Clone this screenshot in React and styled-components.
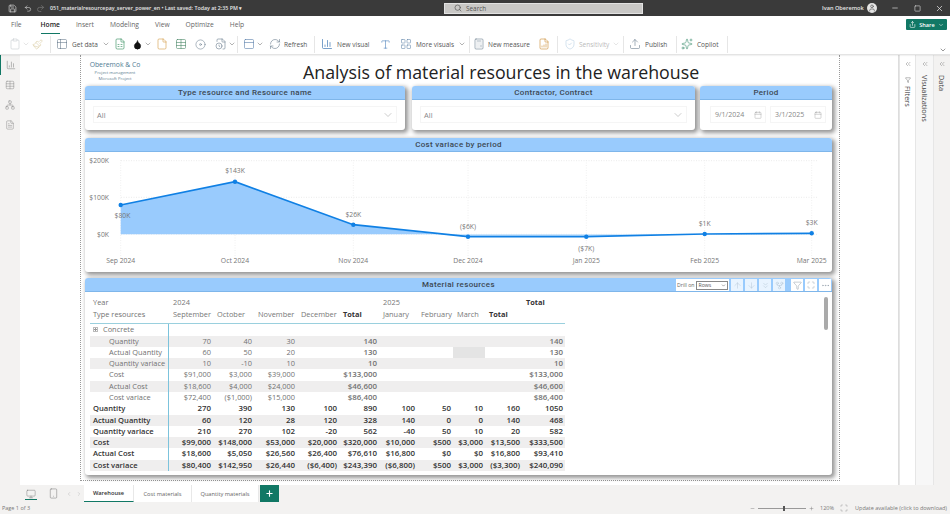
import React from 'react'
import styled, { createGlobalStyle } from 'styled-components'
import {
  Save, Undo2, Redo2, Search, Minus, Plus, Square, X, User, ChevronDown, ChevronsLeft, ChevronLeft, ChevronRight,
  Clipboard, Paintbrush, Table2, FileSpreadsheet, Droplet, File, Table, Disc, FileClock, PanelTop, RefreshCw,
  BarChart3, Type, LayoutGrid, Calculator, FileBarChart, ShieldCheck, Upload, Sparkles, Share, Calendar, Filter,
  Network, FileText, Monitor, Smartphone, ArrowUp, ArrowDown, ChevronsDown, GitFork, Maximize, MoreHorizontal, Scan,
} from 'lucide-react'

const GlobalStyle = createGlobalStyle`
  html, body { margin: 0; padding: 0; background: #fff; }
  * { box-sizing: border-box; }
  body { font-family: "Open Sans", "Noto Sans", sans-serif; }
`

const Shell = styled.div`
  width: 950px;
  height: 514px;
  overflow: hidden;
  display: flex;
  flex-direction: column;
  background: #fff;
`

const TitleBar = styled.div`
  height: 16px;
  background: #3a3a3a;
  display: flex;
  align-items: center;
  color: #e8e8e8;
  flex: none;
`
const TitleIcon = styled.span`
  display: flex;
  flex: none;
  width: ${p => p.$w}px;
  justify-content: center;
  color: ${p => p.$dim ? '#777' : '#c8c8c8'};
`
const FileName = styled.span`
  font-size: 5.3px;
  font-weight: 600;
  width: 194px;
  flex: none;
  margin-left: 2px;
  white-space: nowrap;
`
const SearchBox = styled.div`
  width: 199px;
  height: 11px;
  flex: none;
  margin-left: 200px;
  background: #c9c8c6;
  border: 1px solid #e2e2e2;
  display: flex;
  align-items: center;
  padding-left: 9px;
  gap: 4px;
  color: #555;
  font-size: 6.4px;
`
const UserName = styled.span`
  font-size: 5.6px;
  font-weight: 600;
  margin-left: 179px;
  width: 45px;
  flex: none;
  white-space: nowrap;
`
const Avatar = styled.span`
  width: 10px;
  height: 10px;
  flex: none;
  border-radius: 50%;
  background: #e4e4e4;
  color: #555;
  display: flex;
  align-items: center;
  justify-content: center;
  margin-right: 7px;
`
const WinBtn = styled.span`
  width: 22px;
  flex: none;
  display: flex;
  justify-content: center;
  color: #e0e0e0;
`

const MenuRow = styled.div`
  height: 18px;
  flex: none;
  display: flex;
  align-items: center;
  padding-left: 11px;
  gap: 16px;
  position: relative;
  background: #fff;
`
const MenuItem = styled.span`
  font-size: 6.7px;
  height: 18px;
  line-height: 17px;
  color: ${p => p.$active ? '#222' : '#666'};
  font-weight: ${p => p.$active ? 600 : 400};
  border-bottom: ${p => p.$active ? '1.5px solid #117865' : '0'};
  margin-right: ${p => p.$gap || 0}px;
`
const ShareBtn = styled.span`
  position: absolute;
  right: 3px;
  top: 3px;
  width: 41px;
  height: 11px;
  background: #117865;
  color: #fff;
  font-size: 5.6px;
  font-weight: 600;
  border-radius: 1px;
  display: flex;
  align-items: center;
  justify-content: center;
  gap: 3px;
`

const Toolbar = styled.div`
  height: 21px;
  flex: none;
  display: flex;
  align-items: center;
  padding-left: 9px;
  position: relative;
  background: #fff;
  border-bottom: 1px solid #e4e4e4;
  box-shadow: 0 1px 1px rgba(0,0,0,.05);
`
const Tool = styled.span`
  width: ${p => p.$w}px;
  flex: none;
  display: flex;
  align-items: center;
  gap: ${p => p.$gap ?? 4}px;
  font-size: 6.5px;
  color: ${p => p.$off ? '#bbb' : '#555'};
  white-space: nowrap;
  & > svg { flex: none; }
  & > svg:first-child { color: ${p => p.$c || '#6d7f90'}; }
  & > svg.chev { color: ${p => p.$off ? '#ccc' : '#666'}; }
`
const ToolSep = styled.span`
  width: 1px;
  height: 17px;
  flex: none;
  background: #e6e6e6;
  margin: 0 ${p => p.$r}px 0 ${p => p.$l}px;
`
const Collapse = styled.span`
  position: absolute;
  right: 3px;
  bottom: 0;
  color: #666;
  display: flex;
`

const Main = styled.div`
  flex: 1;
  min-height: 0;
  display: flex;
`
const Rail = styled.div`
  width: 20px;
  flex: none;
  background: #f3f2f1;
  display: flex;
  flex-direction: column;
  align-items: center;
`
const RailIcon = styled.span`
  height: 20px;
  width: 20px;
  display: flex;
  align-items: center;
  justify-content: center;
  color: #8a8a8a;
  border-left: ${p => p.$active ? '1.5px solid #117865' : '0'};
`
const Workspace = styled.div`
  width: 879px;
  flex: none;
  padding-left: 60px;
  background: #fff;
  border-right: 1px solid #ddd;
`
const Canvas = styled.div`
  width: 760px;
  height: 426px;
  border-left: 1px dotted #999;
  border-right: 1px dotted #999;
  border-bottom: 1px dotted #999;
  padding-left: 4px;
`
const TitleRow = styled.div`
  height: 31px;
  display: flex;
  align-items: flex-start;
`
const Logo = styled.div`
  width: 60px;
  flex: none;
  padding-top: 5px;
  text-align: center;
  color: #5f7f92;
  font-size: 4.2px;
  line-height: 6px;
`
const LogoName = styled.div`
  font-size: 6.8px;
  line-height: 10px;
  color: #4f7b93;
`
const PageTitle = styled.h1`
  margin: 3px 0 0 158px;
  font-size: 17.8px;
  line-height: 28px;
  font-weight: 400;
  color: #222;
  white-space: nowrap;
  font-family: "Open Sans", sans-serif;
`
const SlicerRow = styled.div`
  display: flex;
  height: 44px;
  margin-bottom: 8px;
`
const Card = styled.section`
  position: relative;
  width: ${p => p.$w}px;
  height: ${p => p.$h}px;
  margin-right: ${p => p.$mr || 0}px;
  margin-bottom: ${p => p.$mb || 0}px;
  background: #fff;
  border-radius: 3px;
  box-shadow: 2px 2px 4px 1px rgba(0,0,0,.42);
  flex: none;
`
const CardHead = styled.div`
  height: 14px;
  background: #99cbfd;
  border-bottom: 1px solid #7fb6ea;
  border-radius: 3px 3px 0 0;
  text-align: center;
  font-family: Roboto, sans-serif;
  font-size: 8px;
  font-weight: 500;
  letter-spacing: .33px;
  line-height: 13px;
  color: #3c4853;
`
const SlicerBody = styled.div`
  display: flex;
  gap: 5px;
  padding: 6px 8px 0;
`
const Dropdown = styled.div`
  flex: 1;
  height: 17px;
  border: 1px solid #f5f5f5;
  display: flex;
  align-items: center;
  justify-content: space-between;
  padding: 0 2px 0 3px;
  font-size: 7.5px;
  color: #888;
  & svg { color: #999; }
`
const DateBody = styled(SlicerBody)`
  padding: 6px 6px 0 10px;
  gap: 4px;
`
const DateField = styled(Dropdown)`
  font-size: 7px;
  padding: 0 3px 0 4px;
`

const ChartSvg = styled.svg`
  display: block;
  width: 747px;
  height: 120px;
`
const ChartText = styled.text`
  font-family: "Open Sans", sans-serif;
  font-size: 6.8px;
  fill: #777;
`

const TableBody = styled.div`
  padding: 5px 0 0 5px;
`
const GRID = '79px 44px 41px 43px 42px 40px 38px 36px 32px 37px 43px'
const Row = styled.div`
  display: grid;
  grid-template-columns: ${GRID};
  width: 475px;
  height: ${p => p.$h || 11.3}px;
  background: ${p => p.$stripe ? '#efeeee' : 'transparent'};
  border-bottom: ${p => p.$rule ? '1px solid #9ad0de' : '0'};
  font-size: 7.4px;
  line-height: 11.3px;
  color: ${p => p.$strong ? '#333' : '#727272'};
`
const Label = styled.div`
  padding-left: ${p => p.$indent || 3}px;
  border-right: ${p => p.$line ? '1px solid #7cc3dc' : '0'};
  font-weight: ${p => p.$bold ? 600 : 400};
  white-space: nowrap;
  display: flex;
  align-items: ${p => p.$top ? 'flex-start' : 'center'};
  gap: 5px;
  font-size: ${p => p.$bold ? 7.6 : 7.4}px;
`
const Cell = styled.div`
  text-align: right;
  padding-right: 2px;
  white-space: nowrap;
  font-weight: ${p => p.$bold ? 600 : 400};
  font-size: ${p => p.$bold ? 7.9 : 7.4}px;
  background: ${p => p.$mark ? '#e4e4e4' : 'transparent'};
`
const HeadCell = styled.div`
  padding-left: 4px;
  white-space: nowrap;
  font-weight: ${p => p.$bold ? 700 : 400};
  color: ${p => p.$bold ? '#333' : '#777'};
`
const PlusBox = styled.span`
  width: 5px;
  height: 5px;
  border: 1px solid #bbb;
  display: inline-block;
  position: relative;
  &::after {
    content: '';
    position: absolute;
    left: 0;
    top: 1px;
    width: 3px;
    height: 1px;
    background: #999;
  }
  &::before {
    content: '';
    position: absolute;
    left: 1px;
    top: 0;
    width: 1px;
    height: 3px;
    background: #999;
  }
`
const ScrollThumb = styled.div`
  position: absolute;
  left: 739px;
  top: 19px;
  width: 4px;
  height: 33px;
  border-radius: 2px;
  background: #aaa;
`
const DrillBar = styled.div`
  position: absolute;
  right: 1px;
  top: 1px;
  height: 12px;
  display: flex;
  align-items: center;
  gap: 2px;
`
const DrillLabel = styled.div`
  width: 53px;
  height: 12px;
  background: #fff;
  display: flex;
  align-items: center;
  gap: 2px;
  padding-left: 1px;
  font-size: 5.2px;
  color: #666;
  white-space: nowrap;
`
const RowsSelect = styled.span`
  width: 32px;
  height: 9px;
  border: 1px solid #888;
  font-size: 5.2px;
  display: flex;
  align-items: center;
  justify-content: space-between;
  padding: 0 1px;
  color: #555;
`
const DrillBtn = styled.span`
  width: 12px;
  height: 12px;
  background: ${p => p.$pale ? '#e9f4ff' : '#fff'};
  color: ${p => p.$pale ? '#a9bccd' : '#7a8a99'};
  display: flex;
  align-items: center;
  justify-content: center;
  margin-left: ${p => p.$ml || 0}px;
`

const Panes = styled.div`
  flex: 1;
  display: flex;
  min-width: 0;
`
const Pane = styled.div`
  width: ${p => p.$w}px;
  flex: none;
  background: ${p => p.$bg};
  border-left: 1px solid #e6e6e6;
  display: flex;
  flex-direction: column;
  align-items: center;
  padding-top: 5px;
  gap: 7px;
  color: #666;
`
const PaneText = styled.span`
  writing-mode: vertical-rl;
  font-size: 7.4px;
  color: #3f3f3f;
  display: flex;
  align-items: center;
  gap: 3px;
  margin-top: ${p => p.$mt || 0}px;
`

const PageStrip = styled.div`
  height: 17px;
  flex: none;
  background: #f3f2f1;
  display: flex;
  align-items: stretch;
  padding-left: 20px;
`
const ViewBtn = styled.span`
  width: ${p => p.$w}px;
  flex: none;
  display: flex;
  align-items: center;
  justify-content: center;
  color: ${p => p.$dim ? '#bbb' : '#777'};
  position: relative;
  &::after {
    content: '';
    display: ${p => p.$active ? 'block' : 'none'};
    position: absolute;
    left: 5px;
    right: 5px;
    bottom: 2px;
    height: 1px;
    background: #117865;
  }
`
const PageTab = styled.span`
  width: ${p => p.$w}px;
  flex: none;
  background: #fff;
  border-right: 1px solid #e8e8e8;
  border-bottom: ${p => p.$active ? '1.5px solid #117865' : '0'};
  display: flex;
  align-items: center;
  justify-content: center;
  font-size: 5.7px;
  font-weight: ${p => p.$active ? 600 : 400};
  color: ${p => p.$active ? '#333' : '#666'};
`
const AddTab = styled.span`
  width: 19px;
  flex: none;
  margin-left: 1px;
  background: #117865;
  color: #fff;
  display: flex;
  align-items: center;
  justify-content: center;
`
const StatusBar = styled.div`
  height: 12px;
  flex: none;
  background: #f3f2f1;
  display: flex;
  align-items: center;
  padding-left: 2px;
  font-size: 5.5px;
  color: #777;
`
const StatusRight = styled.div`
  margin-left: auto;
  display: flex;
  align-items: center;
  padding-right: 3px;
`
const ZoomLevel = styled.span`
  margin: 0 6px 0 6px;
`
const UpdateNote = styled.span`
  margin-left: 7px;
`
const Slider = styled.span`
  width: 48px;
  height: 1px;
  margin: 0 3px;
  background: #999;
  position: relative;
  &::after {
    content: '';
    position: absolute;
    left: 25px;
    top: -2px;
    width: 2px;
    height: 5px;
    background: #555;
  }
`

const points = [
  [120.7, 205, '$80K', 218, 'Sep 2024'],
  [235, 181.7, '$143K', 173, 'Oct 2024'],
  [353.3, 224.7, '$26K', 216.5, 'Nov 2024'],
  [468, 236.7, '($6K)', 228.5, 'Dec 2024'],
  [586.3, 236.7, '($7K)', 250.5, 'Jan 2025'],
  [704.7, 234, '$1K', 225.5, 'Feb 2025'],
  [811.7, 233.3, '$3K', 224.5, 'Mar 2025'],
]

const CostChart = () => {
  const line = points.map(p => `${p[0]},${p[1]}`).join(' ')
  return (
    <ChartSvg viewBox="85 152 747 120">
      {[160.7, 197.3, 234.3].map(y => (
        <line key={y} x1="121" x2="818" y1={y} y2={y} stroke="#e6e6e6" strokeWidth=".8" strokeDasharray="1 1.5" />
      ))}
      {points.map(p => (
        <line key={p[4]} x1={p[0]} x2={p[0]} y1="160" y2="258" stroke="#ececec" strokeWidth=".8" strokeDasharray="1 1.5" />
      ))}
      <polygon points="120.7,234.3 120.7,205 235,181.7 353.3,224.7 438,234.3" fill="#99cbfd" />
      <polygon points="438,234.3 468,236.7 586.3,236.7 704.7,234 704.7,234.3" fill="#bfdffd" />
      <polyline points={line} fill="none" stroke="#1080e4" strokeWidth="1.7" />
      {points.map(p => <circle key={p[4]} cx={p[0]} cy={p[1]} r="2.2" fill="#1080e4" />)}
      {[['$200K', 163.3], ['$100K', 200], ['$0K', 237]].map(([t, y]) => (
        <ChartText key={t} x="109" y={y} textAnchor="end">{t}</ChartText>
      ))}
      {points.map(p => (
        <ChartText key={p[2]} x={p[0] === 120.7 ? 122.5 : p[0]} y={p[3]} textAnchor="middle">{p[2]}</ChartText>
      ))}
      {points.map(p => (
        <ChartText key={p[4]} x={p[0]} y="262.5" textAnchor="middle">{p[4]}</ChartText>
      ))}
    </ChartSvg>
  )
}

const rows = [
  ['Quantity', '70', '40', '30', '', '140', '', '', '', '', '140'],
  ['Actual Quantity', '60', '50', '20', '', '130', '', '', '', '', '130'],
  ['Quantity variace', '10', '-10', '10', '', '10', '', '', '', '', '10'],
  ['Cost', '$91,000', '$3,000', '$39,000', '', '$133,000', '', '', '', '', '$133,000'],
  ['Actual Cost', '$18,600', '$4,000', '$24,000', '', '$46,600', '', '', '', '', '$46,600'],
  ['Cost variace', '$72,400', '($1,000)', '$15,000', '', '$86,400', '', '', '', '', '$86,400'],
]
const totals = [
  ['Quantity', '270', '390', '130', '100', '890', '100', '50', '10', '160', '1050'],
  ['Actual Quantity', '60', '120', '28', '120', '328', '140', '0', '0', '140', '468'],
  ['Quantity variace', '210', '270', '102', '-20', '562', '-40', '50', '10', '20', '582'],
  ['Cost', '$99,000', '$148,000', '$53,000', '$20,000', '$320,000', '$10,000', '$500', '$3,000', '$13,500', '$333,500'],
  ['Actual Cost', '$18,600', '$5,050', '$26,560', '$26,400', '$76,610', '$16,800', '$0', '$0', '$16,800', '$93,410'],
  ['Cost variace', '$80,400', '$142,950', '$26,440', '($6,400)', '$243,390', '($6,800)', '$500', '$3,000', '($3,300)', '$240,090'],
]

const Matrix = () => (
  <TableBody>
    <Row $h={12}>
      <Label>Year</Label>
      <HeadCell>2024</HeadCell>
      <span /><span /><span /><span />
      <HeadCell>2025</HeadCell>
      <span /><span /><span />
      <HeadCell $bold>Total</HeadCell>
    </Row>
    <Row $h={15} $rule>
      <Label $top>Type resources</Label>
      {['September', 'October', 'November', 'December'].map(m => <HeadCell key={m}>{m}</HeadCell>)}
      <HeadCell $bold>Total</HeadCell>
      {['January', 'February', 'March'].map(m => <HeadCell key={m}>{m}</HeadCell>)}
      <HeadCell $bold>Total</HeadCell>
      <span />
    </Row>
    <Row $h={11.5}>
      <Label $line><PlusBox />Concrete</Label>
    </Row>
    {rows.map((r, i) => (
      <Row key={r[0]} $stripe={i % 2 === 0}>
        <Label $line $indent={19}>{r[0]}</Label>
        {r.slice(1).map((v, j) => (
          <Cell key={j} $bold={j === 4 || j === 9} $mark={i === 1 && j === 7}>{v}</Cell>
        ))}
      </Row>
    ))}
    {totals.map((r, i) => (
      <Row key={r[0] + 'total'} $strong $stripe={i % 2 === 1}>
        <Label $line $bold>{r[0]}</Label>
        {r.slice(1).map((v, j) => <Cell key={j} $bold>{v}</Cell>)}
      </Row>
    ))}
  </TableBody>
)

const chev = <ChevronDown className="chev" size={8} strokeWidth={1.5} />

export default function App() {
  return (
    <Shell>
      <GlobalStyle />
      <TitleBar>
        <TitleIcon $w={24}><Save size={9} /></TitleIcon>
        <TitleIcon $w={8}><Undo2 size={9} /></TitleIcon>
        <TitleIcon $w={16} $dim><Redo2 size={9} /></TitleIcon>
        <FileName>051_materialresourcepay_server_power_en • Last saved: Today at 2:35 PM ▾</FileName>
        <SearchBox><Search size={8} />Search</SearchBox>
        <UserName>Ivan Oberemok</UserName>
        <Avatar><User size={8} /></Avatar>
        <WinBtn><Minus size={8} /></WinBtn>
        <WinBtn><Square size={7} /></WinBtn>
        <WinBtn><X size={9} /></WinBtn>
      </TitleBar>

      <MenuRow>
        <MenuItem $gap={3}>File</MenuItem>
        <MenuItem $active>Home</MenuItem>
        <MenuItem>Insert</MenuItem>
        <MenuItem>Modeling</MenuItem>
        <MenuItem>View</MenuItem>
        <MenuItem>Optimize</MenuItem>
        <MenuItem>Help</MenuItem>
        <ShareBtn><Share size={7} />Share<ChevronDown size={6} /></ShareBtn>
      </MenuRow>

      <Toolbar>
        <Tool $w={23} $off $c="#c8ccd0" $gap={1}><Clipboard size={12} strokeWidth={1.2} />{chev}</Tool>
        <Tool $w={12} $c="#d8c9a0"><Paintbrush size={11} strokeWidth={1.2} /></Tool>
        <ToolSep $l={6} $r={5} />
        <Tool $w={58}><Table2 size={12} strokeWidth={1.2} />Get data{chev}</Tool>
        <Tool $w={18} $c="#2d8a57"><FileSpreadsheet size={12} strokeWidth={1.2} /></Tool>
        <Tool $w={24} $c="#111" $gap={1}><Droplet size={11} fill="#111" strokeWidth={1} />{chev}</Tool>
        <Tool $w={19} $c="#d39a45"><File size={12} strokeWidth={1.2} /></Tool>
        <Tool $w={20} $c="#4d8a6a"><Table size={12} strokeWidth={1.2} /></Tool>
        <Tool $w={20}><Disc size={11} strokeWidth={1.2} /></Tool>
        <Tool $w={17} $gap={1}><FileClock size={12} strokeWidth={1.2} />{chev}</Tool>
        <ToolSep $l={5} $r={5} />
        <Tool $w={26} $c="#5b80ab" $gap={1}><PanelTop size={12} strokeWidth={1.2} />{chev}</Tool>
        <Tool $w={40} $gap={3}><RefreshCw size={12} strokeWidth={1.2} />Refresh</Tool>
        <ToolSep $l={5} $r={6} />
        <Tool $w={59} $c="#3f78b5"><BarChart3 size={12} strokeWidth={1.4} />New visual</Tool>
        <Tool $w={20} $c="#3f78b5"><Type size={11} strokeWidth={1.2} /></Tool>
        <Tool $w={64} $c="#6d8fb0"><LayoutGrid size={12} strokeWidth={1.2} />More visuals{chev}</Tool>
        <ToolSep $l={5} $r={3} />
        <Tool $w={65} $gap={3}><Calculator size={12} strokeWidth={1.2} />New measure</Tool>
        <Tool $w={14} $c="#c9892f"><FileBarChart size={12} strokeWidth={1.2} /></Tool>
        <ToolSep $l={5} $r={6} />
        <Tool $w={56} $off $c="#b9d0e4" $gap={3}><ShieldCheck size={12} strokeWidth={1.2} />Sensitivity{chev}</Tool>
        <ToolSep $l={3} $r={5} />
        <Tool $w={41}><Upload size={12} strokeWidth={1.2} />Publish</Tool>
        <ToolSep $l={6} $r={4} />
        <Tool $w={41} $c="#3c8f6e"><Sparkles size={12} strokeWidth={1.2} />Copilot</Tool>
        <ToolSep $l={5} $r={0} />
        <Collapse><ChevronDown size={8} /></Collapse>
      </Toolbar>

      <Main>
        <Rail>
          <RailIcon $active><BarChart3 size={10} strokeWidth={1.4} /></RailIcon>
          <RailIcon><Table size={10} strokeWidth={1.2} /></RailIcon>
          <RailIcon><Network size={10} strokeWidth={1.2} /></RailIcon>
          <RailIcon><FileText size={10} strokeWidth={1.2} /></RailIcon>
        </Rail>
        <Workspace>
          <Canvas>
            <TitleRow>
              <Logo>
                <LogoName>Oberemok &amp; Co</LogoName>
                <div>Project management</div>
                <div>Microsoft Project</div>
              </Logo>
              <PageTitle>Analysis of material resources in the warehouse</PageTitle>
            </TitleRow>
            <SlicerRow>
              <Card $w={320} $mr={7}>
                <CardHead>Type resource and Resource name</CardHead>
                <SlicerBody><Dropdown>All<ChevronDown size={12} strokeWidth={1} /></Dropdown></SlicerBody>
              </Card>
              <Card $w={283} $mr={5}>
                <CardHead>Contractor, Contract</CardHead>
                <SlicerBody><Dropdown>All<ChevronDown size={12} strokeWidth={1} /></Dropdown></SlicerBody>
              </Card>
              <Card $w={132}>
                <CardHead>Period</CardHead>
                <DateBody>
                  <DateField>9/1/2024<Calendar size={8} strokeWidth={1.2} /></DateField>
                  <DateField>3/1/2025<Calendar size={8} strokeWidth={1.2} /></DateField>
                </DateBody>
              </Card>
            </SlicerRow>
            <Card $w={747} $h={134} $mb={6}>
              <CardHead>Cost variace by period</CardHead>
              <CostChart />
            </Card>
            <Card $w={747} $h={197}>
              <CardHead>Material resources</CardHead>
              <DrillBar>
                <DrillLabel>Drill on<RowsSelect>Rows<ChevronDown size={5} strokeWidth={2.4} /></RowsSelect></DrillLabel>
                <DrillBtn $pale><ArrowUp size={9} strokeWidth={1.1} /></DrillBtn>
                <DrillBtn $pale><ArrowDown size={9} strokeWidth={1.1} /></DrillBtn>
                <DrillBtn $pale><ChevronsDown size={9} strokeWidth={1.1} /></DrillBtn>
                <DrillBtn $pale><GitFork size={9} strokeWidth={1.1} /></DrillBtn>
                <DrillBtn $ml={4}><Filter size={9} strokeWidth={1.1} /></DrillBtn>
                <DrillBtn><Maximize size={8} strokeWidth={1.1} /></DrillBtn>
                <DrillBtn><MoreHorizontal size={9} strokeWidth={1.1} /></DrillBtn>
              </DrillBar>
              <Matrix />
              <ScrollThumb />
            </Card>
          </Canvas>
        </Workspace>
        <Panes>
          <Pane $w={16} $bg="#fff">
            <ChevronsLeft size={8} strokeWidth={1.2} />
            <PaneText $mt={2}><Filter size={6} strokeWidth={1.4} />Filters</PaneText>
          </Pane>
          <Pane $w={18} $bg="#f7f7f7">
            <ChevronsLeft size={8} strokeWidth={1.2} />
            <PaneText>Visualizations</PaneText>
          </Pane>
          <Pane $w={17} $bg="#f3f2f1">
            <ChevronsLeft size={8} strokeWidth={1.2} />
            <PaneText>Data</PaneText>
          </Pane>
        </Panes>
      </Main>

      <PageStrip>
        <ViewBtn $w={22} $active><Monitor size={10} strokeWidth={1.1} /></ViewBtn>
        <ViewBtn $w={22}><Smartphone size={11} strokeWidth={1.1} /></ViewBtn>
        <ViewBtn $w={10} $dim><ChevronLeft size={6} /></ViewBtn>
        <ViewBtn $w={10} $dim><ChevronRight size={6} /></ViewBtn>
        <PageTab $w={50} $active>Warehouse</PageTab>
        <PageTab $w={58}>Cost materials</PageTab>
        <PageTab $w={67}>Quantity materials</PageTab>
        <AddTab><Plus size={9} strokeWidth={3} /></AddTab>
      </PageStrip>
      <StatusBar>
        Page 1 of 3
        <StatusRight>
          <Minus size={5} />
          <Slider />
          <Plus size={5} />
          <ZoomLevel>120%</ZoomLevel>
          <Scan size={8} strokeWidth={1.2} />
          <UpdateNote>Update available (click to download)</UpdateNote>
        </StatusRight>
      </StatusBar>
    </Shell>
  )
}
